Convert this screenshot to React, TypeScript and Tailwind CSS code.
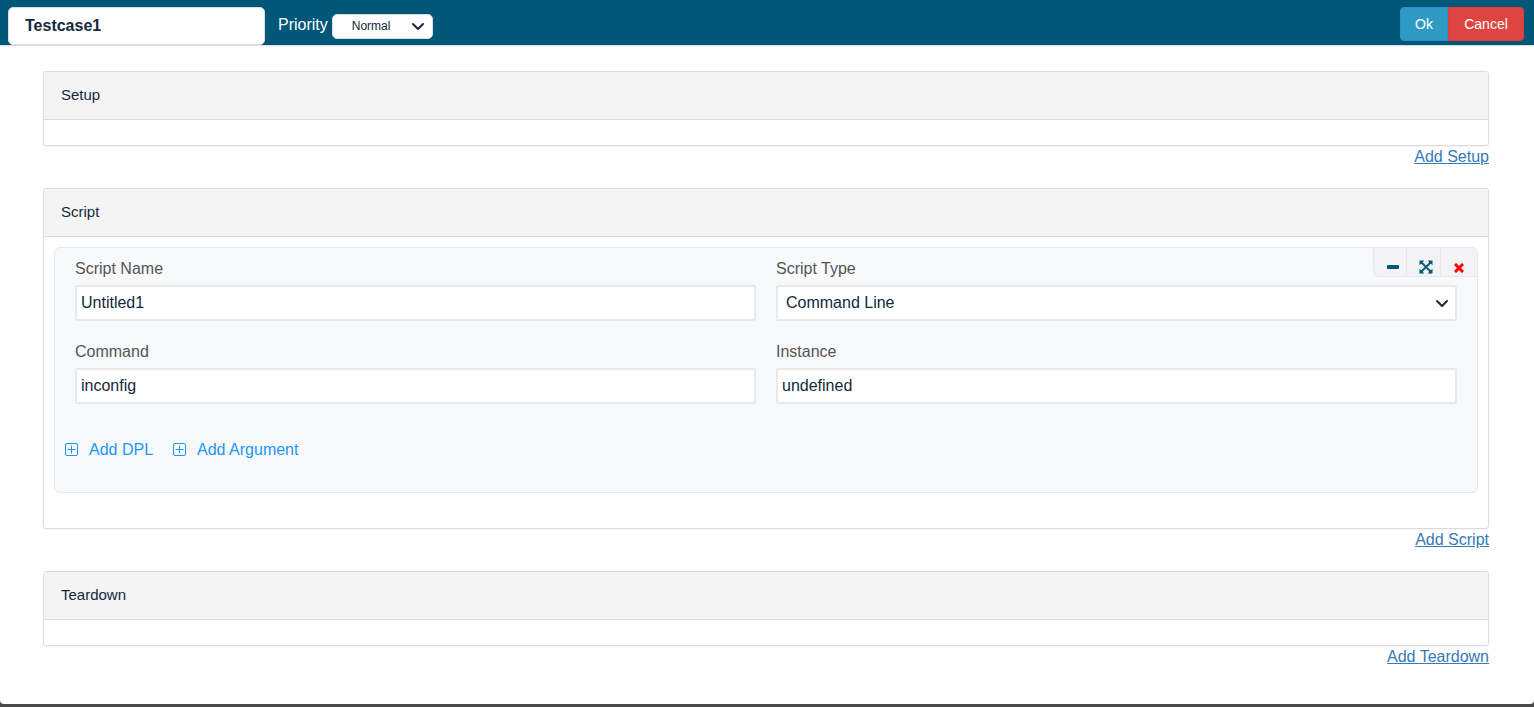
import type { ReactNode } from "react";

const fields = [
  { id: "script-name", label: "Script Name", value: "Untitled1" },
  { id: "script-type", label: "Script Type", value: "Command Line", options: ["Command Line", "Manual"] },
  { id: "command", label: "Command", value: "inconfig" },
  { id: "instance", label: "Instance", value: "undefined" },
];

function Chevron({ className }: { className: string }) {
  return (
    <svg
      viewBox="0 0 16 16"
      className={`pointer-events-none absolute h-4 w-4 ${className}`}
      fill="none"
      stroke="#13293d"
      strokeWidth="2"
      strokeLinecap="round"
      strokeLinejoin="round"
    >
      <path d="M3 6l5 5 5-5" />
    </svg>
  );
}

function PlusSquareIcon() {
  return (
    <svg viewBox="0 0 13 13" className="mb-px h-[13px] w-[13px]" fill="none" stroke="#2196f3">
      <rect x="0.5" y="0.5" width="12" height="12" rx="1.5" />
      <path d="M6.5 2.5v8M2.5 6.5h8" />
    </svg>
  );
}

function MinusIcon() {
  return (
    <svg viewBox="0 0 12 4" className="h-1 w-3" fill="#005778">
      <rect x="0" y="0" width="12" height="4" rx="1" />
    </svg>
  );
}

function ExpandIcon() {
  return (
    <svg viewBox="0 0 14 14" className="h-3.5 w-3.5" fill="#005778">
      <path d="M0.5 0.5h4.8L3.9 1.9 3.3 3.3 1.9 3.9 0.5 5.3z" />
      <path d="M13.5 0.5v4.8l-1.4-1.4-1.4-.6-.6-1.4L8.7.5z" />
      <path d="M0.5 13.5V8.7l1.4 1.4 1.4.6.6 1.4 1.4 1.4z" />
      <path d="M13.5 13.5H8.7l1.4-1.4.6-1.4 1.4-.6 1.4-1.4z" />
      <path d="M2.5 2.5l9 9M11.5 2.5l-9 9" stroke="#005778" strokeWidth="1.8" />
    </svg>
  );
}

function CloseIcon() {
  return (
    <svg viewBox="0 0 10 10" className="h-2.5 w-2.5" stroke="#ff0000" strokeWidth="3">
      <path d="M1 1l8 8M9 1l-8 8" />
    </svg>
  );
}

function Panel({ title, children }: { title: string; children?: ReactNode }) {
  return (
    <section className="flex flex-col">
      <div className="rounded-[3px] border border-[#dcdcdc] shadow-[0_1px_1px_rgba(0,0,0,0.05)]">
        <h2 className="rounded-t-[2px] border-b border-[#dcdcdc] bg-[#f4f4f4] px-[17px] pt-[11px] pb-3 text-[15px] leading-6 text-[#13293d]">
          {title}
        </h2>
        {children ? <div className="px-2.5 pt-2.5 pb-[35px]">{children}</div> : <div className="h-[25px]" />}
      </div>
      <a href="#" className="self-end leading-[22px] text-[#337ab7] underline">
        Add {title}
      </a>
    </section>
  );
}

function ScriptForm() {
  return (
    <div className="relative rounded-md border border-[#e7e8ee] bg-[#f8f9fb] px-5 pt-[9px] pb-[30px]">
      {/* corner controls */}
      <div className="absolute top-0 right-0 flex rounded-tr-md rounded-bl-md border-b border-l border-[#e7e8ee] bg-[#f3f3f6]">
        <button type="button" aria-label="Minimize" className="flex h-7 w-8 items-end justify-center pb-[7px] pl-1.5">
          <MinusIcon />
        </button>
        <button
          type="button"
          aria-label="Expand"
          className="flex h-7 w-[34px] items-end justify-center border-l border-[#e7e8ee] pb-0.5 pl-1"
        >
          <ExpandIcon />
        </button>
        <button
          type="button"
          aria-label="Remove"
          className="flex h-7 w-[37px] items-end justify-center border-l border-[#e7e8ee] pr-px pb-[3px]"
        >
          <CloseIcon />
        </button>
      </div>

      <div className="grid grid-cols-2 gap-x-5 gap-y-[19px]">
        {fields.map((field) => (
          <div key={field.id} className="flex flex-col gap-1">
            <label htmlFor={field.id} className="self-start leading-6 text-[#555555]">
              {field.label}
            </label>
            {field.options ? (
              <div className="relative">
                <select
                  id={field.id}
                  defaultValue={field.value}
                  className="block h-9 w-full appearance-none rounded-[2px] border-2 border-[#e9e9ea] bg-white pr-8 pl-2 text-[#13293d]"
                >
                  {field.options.map((option) => (
                    <option key={option}>{option}</option>
                  ))}
                </select>
                <Chevron className="top-2.5 right-[7px]" />
              </div>
            ) : (
              <input
                id={field.id}
                type="text"
                defaultValue={field.value}
                className="block h-9 w-full rounded-[2px] border-2 border-[#e9e9ea] bg-white px-1 text-[#13293d]"
              />
            )}
          </div>
        ))}
      </div>

      <div className="-ml-2.5 mt-[34px] flex gap-5">
        {["Add DPL", "Add Argument"].map((action) => (
          <button key={action} type="button" className="flex items-center gap-[11px] leading-6 text-[#2196f3]">
            <PlusSquareIcon />
            {action}
          </button>
        ))}
      </div>
    </div>
  );
}

export default function App() {
  return (
    <div className="min-h-screen bg-[#4a4a4a] font-['Liberation_Sans',Arial,sans-serif] text-base">
      <div className="rounded-b bg-white pb-9">
        {/* HEADER */}
        <header className="flex h-[46px] items-start border-b border-[#dddddd] bg-[#005778] pt-[7px] pr-2.5 pl-2">
          <input
            type="text"
            aria-label="Testcase name"
            defaultValue="Testcase1"
            className="h-[38px] w-[257px] rounded-[5px] border border-[#dddddd] bg-white px-4 font-bold text-[#13293d]"
          />
          <label htmlFor="priority" className="ml-[13px] pt-1.5 leading-6 text-white">
            Priority
          </label>
          <div className="relative mt-[7px] ml-1">
            <select
              id="priority"
              defaultValue="Normal"
              className="block h-[25px] w-[101px] appearance-none rounded-[5px] border border-[#dddddd] bg-white pb-0.5 pl-[19px] text-xs text-[#13293d]"
            >
              <option>Low</option>
              <option>Normal</option>
              <option>High</option>
            </select>
            <Chevron className="top-1 right-[7px]" />
          </div>
          <div className="ml-auto flex text-sm text-white">
            <button type="button" className="h-[34px] w-12 rounded-l border border-[#2b93cc] bg-[#2f9ac4]">
              Ok
            </button>
            <button type="button" className="h-[34px] w-[76px] rounded-r border border-[#e03e3a] bg-[#df4540]">
              Cancel
            </button>
          </div>
        </header>

        {/* CONTENT */}
        <main className="flex flex-col gap-5 pt-[25px] pr-[45px] pl-[43px]">
          <Panel title="Setup" />
          <Panel title="Script">
            <ScriptForm />
          </Panel>
          <Panel title="Teardown" />
        </main>
      </div>
    </div>
  );
}
